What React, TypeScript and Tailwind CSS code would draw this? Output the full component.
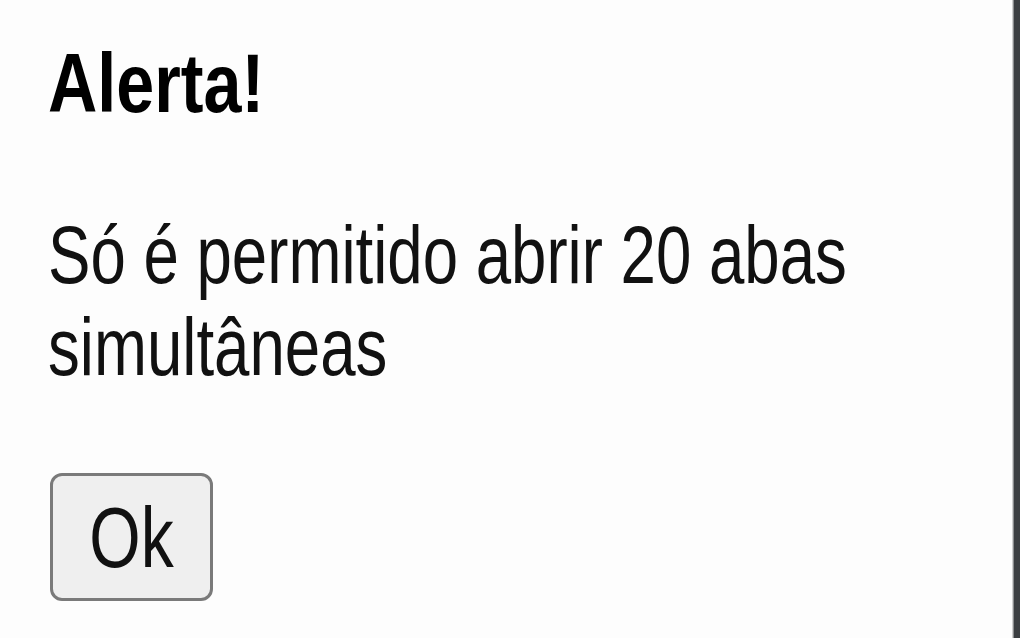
const font = { fontFamily: '"Liberation Sans", Arial, sans-serif' };

const AlertDialog = () => {
    return (
        <div className="flex-1 pl-[48px] pt-[41px] text-black" style={font}>
            <div className="h-[84px]">
                <h1 className="inline-block origin-top-left scale-y-[1.22] text-[68.3px] font-bold leading-none">
                    Alerta!
                </h1>
            </div>

            <div className="mt-[84px] h-[184px]">
                <p className="w-[940px] origin-top-left scale-y-[1.275] text-[63.6px] leading-[72.2px] text-[#111]">
                    Só é permitido abrir 20 abas simultâneas
                </p>
            </div>

            <button
                className="mt-[80px] ml-[2px] flex h-[128px] w-[163px] items-center justify-center rounded-[12px] border-[3.5px] border-[#7a7a7a] bg-[#efefef] text-[#111]"
                style={font}
            >
                <span className="inline-block scale-y-[1.3] text-[66px] leading-none">Ok</span>
            </button>
        </div>
    );
};

export default function App() {
    return (
        <div className="flex h-[638px] w-[1020px] overflow-hidden bg-[#fdfdfd]">
            <AlertDialog />
            <div className="w-[1px] bg-[#d0d0d0]" />
            <div className="w-[1px] bg-[#8a8c8e]" />
            <div className="w-[6px] bg-[#3c3f42]" />
        </div>
    );
}
